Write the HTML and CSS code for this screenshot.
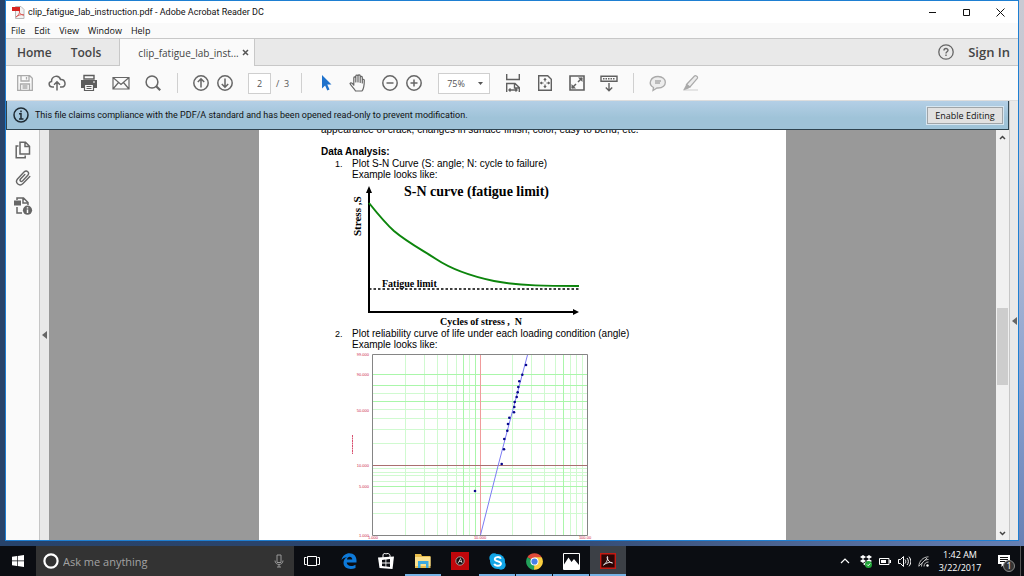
FILE: index.html
```html
<!DOCTYPE html>
<html lang="en">
<head>
<meta charset="utf-8">
<title>clip_fatigue_lab_instruction.pdf - Adobe Acrobat Reader DC</title>
<link rel="stylesheet" href="styles.css">
</head>
<body>
<div class="desktop">
  <div class="window">
    <header class="titlebar">
      <svg class="app-icon" width="13" height="13" viewBox="0 0 13 13"><path d="M3.500.5H9l3 3v9H3.500z" fill="#f3f3f3" stroke="#b9b9b9"/><path d="M0 1h8v4H0z" fill="#d8231f"/><path d="M4 11c2-1 4-4 3.500-6-.5 2 1.500 4 4.500 4-3-1-5.500 0-8 2z" fill="none" stroke="#d64a45" stroke-width=".8"/></svg>
      <h1 class="title">clip_fatigue_lab_instruction.pdf - Adobe Acrobat Reader DC</h1>
      <div class="caption-buttons">
        <button class="caption" aria-label="Minimize"><svg width="9" height="9" viewBox="0 0 9 9"><path d="M1 4.500h7" stroke="#111"/></svg></button>
        <button class="caption" aria-label="Maximize"><svg width="9" height="9" viewBox="0 0 9 9"><path d="M1.500 1.500h6v6h-6z" fill="none" stroke="#111"/></svg></button>
        <button class="caption" aria-label="Close"><svg width="9" height="9" viewBox="0 0 9 9"><path d="M.5.5l8 8M8.500.5l-8 8" stroke="#111"/></svg></button>
      </div>
    </header>
    <nav class="menubar">
      <button>File</button><button>Edit</button><button>View</button><button>Window</button><button>Help</button>
    </nav>
    <div class="tabbar">
      <button class="main-tab">Home</button>
      <button class="main-tab">Tools</button>
      <div class="doc-tab"><span>clip_fatigue_lab_inst...</span><button class="tab-close" aria-label="Close tab"><svg width="7" height="7" viewBox="0 0 7 7"><path d="M1 1l5 5M6 1L1 6" stroke="#555" stroke-width="1.500"/></svg></button></div>
      <div class="account">
        <button aria-label="Help"><svg width="16" height="16" viewBox="0 0 16 16" fill="none" stroke="#666"><circle cx="8" cy="8" r="7.200" stroke-width="1.300"/><path d="M6 6.500c0-2.600 4-2.600 4-.2C10 7.800 8 7.700 8 9.500M8 10.500v1.500" stroke-width="1.400"/></svg></button>
        <button class="sign-in">Sign In</button>
      </div>
    </div>
    <div class="toolbar">
      <div class="group spaced">
        <button aria-label="Save"><svg viewBox="0 0 20 20" fill="none" stroke="#aaa" stroke-width="1.300"><path d="M2.700 2.700h12l2.600 2.600v12H2.700zM6 3v5h8V3M5.500 17v-6h9v6M7.500 13h5M7.500 15h5M11.500 4v2.500"/></svg></button>
        <button aria-label="Cloud upload"><svg viewBox="0 0 20 20" fill="none" stroke="#666" stroke-width="1.500"><path d="M7 14H5.500C1.500 14 1 9 4.500 8.500 4.500 2.500 12 1.500 13.500 6.500 19 6 19.500 14 15 14h-2M10 17.500V9M7 11.800L10 8.800l3 3"/></svg></button>
        <button aria-label="Print"><svg viewBox="0 0 20 20"><path d="M5 2.500h10V6H5z" fill="none" stroke="#5d5d5d" stroke-width="1.400"/><path d="M2 7h16v8h-3v-3H5v3H2z" fill="#5d5d5d"/><path d="M5.500 11.500h9v6h-9zM7.500 13.500h5M7.500 15.500h5" fill="#fafafa" stroke="#5d5d5d" stroke-width="1.200"/><path d="M14 9h2" stroke="#fff"/></svg></button>
        <button aria-label="Email"><svg viewBox="0 0 20 20" fill="none" stroke="#666" stroke-width="1.200"><path d="M2 4.500h16v11.500H2zM2 4.500l8 7 8-7M2 16l5.500-6.500M18 16l-5.500-6.500"/></svg></button>
        <button aria-label="Find"><svg viewBox="0 0 20 20" fill="none" stroke="#666"><circle cx="9" cy="9" r="5.900" stroke-width="1.500"/><path d="M13.200 13.200l4 4" stroke-width="2.200"/></svg></button>
      </div>
      <div class="group pages">
        <button aria-label="Previous page"><svg viewBox="0 0 20 20" fill="none" stroke="#666" stroke-width="1.500"><circle cx="10" cy="10" r="7.200"/><path d="M10 14.500V6M6.800 9L10 5.800 13.200 9"/></svg></button>
        <button aria-label="Next page"><svg viewBox="0 0 20 20" fill="none" stroke="#666" stroke-width="1.500"><circle cx="10" cy="10" r="7.200"/><path d="M10 5.500V14M6.800 11l3.200 3.200 3.200-3.200"/></svg></button>
        <input class="page-number" type="text" value="2" aria-label="Page number">
        <span class="page-total">/&nbsp; 3</span>
      </div>
      <div class="group spaced">
        <button aria-label="Select"><svg viewBox="0 0 20 20"><path d="M6 2l9.500 9.500h-4.200l2.200 5-2.200 1-2.200-5L6 15.500z" fill="#1f72cc"/></svg></button>
        <button aria-label="Pan"><svg viewBox="0 0 20 20" fill="none" stroke="#666" stroke-width="1.200" stroke-linejoin="round"><path d="M7.500 18C6 15 3 13 2 10.500c.8-1.200 2.300-.5 3.800 1.700V4.800c.2-1.200 1.800-1.200 2 0V9 3c.2-1.200 2-1.200 2.200 0v6-6.200c.2-1.200 2-1.200 2.200 0V9.500 4.300c.3-1.200 1.900-1.100 2.100 0V10 7c.4-1.100 1.900-1 2 .2 0 5-.3 8.300-2.300 10.800z"/></svg></button>
        <div class="zoom-pair">
          <button aria-label="Zoom out"><svg viewBox="0 0 20 20" fill="none" stroke="#666" stroke-width="1.500"><circle cx="10" cy="10" r="7.200"/><path d="M6.500 10h7"/></svg></button>
          <button aria-label="Zoom in"><svg viewBox="0 0 20 20" fill="none" stroke="#666" stroke-width="1.500"><circle cx="10" cy="10" r="7.200"/><path d="M6.500 10h7M10 6.500v7"/></svg></button>
        </div>
        <select class="zoom-level" aria-label="Zoom level"><option>75%</option></select>
        <button aria-label="Fit width"><svg viewBox="0 0 20 20" fill="none" stroke="#606060" stroke-width="1.400"><path d="M3.700 1v5.500h12.600V1M3.700 19v-8.500H12l4.300 4V19M11.500 10.500v4.500h5M6 17h8M7.500 15.500L6 17l1.500 1.500M12.500 15.500L14 17l-1.500 1.500"/></svg></button>
        <button aria-label="Fit page"><svg viewBox="0 0 20 20" fill="none" stroke="#606060" stroke-width="1.400"><path d="M3.700 2.700h9l3.600 3.600v11H3.700z"/><path stroke-width="1.100" d="M10 5.500v3M10 11.500v3M5.500 10h3M11.500 10h3M8.800 6.800L10 5.500l1.200 1.300M8.800 13.200l1.200 1.300 1.200-1.300M6.800 8.800L5.500 10l1.300 1.200M13.200 8.800l1.300 1.200-1.300 1.200"/></svg></button>
        <button aria-label="Full screen"><svg viewBox="0 0 20 20" fill="none" stroke="#606060"><path stroke-width="1.600" d="M3 3h14v14H3z"/><path stroke-width="1.500" d="M11 9l4-4M9 11l-4 4"/><path d="M11 4.500h4.500V9zM4.500 11v4.500H9z" fill="#606060" stroke="none"/></svg></button>
        <button aria-label="Read mode"><svg viewBox="0 0 20 20" fill="none" stroke="#606060" stroke-width="1.400"><path d="M2 3.200h16v5H2z"/><path d="M4 5.800h12" stroke-dasharray="1.500 1"/><path d="M10 10v7.500M6.800 14.500l3.200 3.200 3.200-3.200"/></svg></button>
      </div>
      <div class="group spaced">
        <button aria-label="Comment"><svg viewBox="0 0 20 20" fill="#ededed" stroke="#aaa" stroke-width="1.300"><path d="M5.500 14.500C-.5 11 2.500 3.500 10 3.500c9.500 0 10 11.500 0 11.500H9L5 17.500zM7 8h6M7 10h5"/></svg></button>
        <button aria-label="Highlight"><svg viewBox="0 0 20 20"><path d="M4 16h14v2H4z" fill="#e4e4e4"/><path d="M6.500 11.500L14.500 3c1-1 4 .8 2.800 2.300L10 14z" fill="#ececec" stroke="#aaa" stroke-width="1.200"/><path d="M6.500 11l4 3.200-2.500 1.500L3 17.500z" fill="#aaa"/></svg></button>
      </div>
    </div>

    <div class="workspace">
      <div class="doc-column">
        <div class="notice">
          <svg width="16" height="16" viewBox="0 0 16 16" fill="none" stroke="#1f2b33"><circle cx="8" cy="8" r="7" stroke-width="1.500"/><path d="M6 6.800h2V12M6 12h4.500M8 3.500v1.700" stroke-width="1.500"/></svg>
          <p>This file claims compliance with the PDF/A standard and has been opened read-only to prevent modification.</p>
          <button class="enable">Enable Editing</button>
        </div>
        <div class="viewer">
          <aside class="side-tools">
            <button aria-label="Page thumbnails"><svg width="16" height="18" viewBox="0 0 16 18" fill="none" stroke="#666" stroke-width="1.500"><path d="M5 1.200h5.500l4 4V13H5zM10 1.500v4h4.500M3.500 5H1.200v11.700h9V14.500"/></svg></button>
            <button aria-label="Attachments"><svg width="16" height="18" viewBox="0 0 16 18" fill="none" stroke="#666" stroke-width="1.400" stroke-linecap="round"><path d="M14.800 7.500L8 14.500c-3.500 3.500-8.500-.5-5.500-4.500L9 3c2.800-2.500 6 .5 3.800 3.300L7.500 12c-1.700 1.200-3.200-.3-2-2l4.300-4.500"/></svg></button>
            <button aria-label="Document standards"><svg width="20" height="18" viewBox="0 0 20 18" fill="none" stroke="#666" stroke-width="1.500"><path d="M4 3V1h6.500L15 5.500V8M10 1v5h5M4 10v6h5"/><path d="M1 3.500h7v5H1z" fill="#666" stroke="none"/><circle cx="14.500" cy="13.200" r="4.600" fill="#666" stroke="none"/><path d="M14.500 12.500v3.500M14.500 10.200v1.300" stroke="#fff"/></svg></button>
          </aside>
          <button class="collapser" aria-label="Collapse navigation"><svg width="5" height="8" viewBox="0 0 5 8"><path d="M5 0v8L0 4z" fill="#666"/></svg></button>
          <main class="canvas">
            <article class="page">
              <p class="cut-line">appearance of crack, changes in surface finish, color, easy to bend, etc.</p>
              <h2>Data Analysis:</h2>
              <ol>
                <li>Plot S-N Curve (S: angle; N: cycle to failure)<br>Example looks like:
                  <svg class="figure" width="240" height="146" viewBox="352 182 240 146" font-family="Liberation Serif, serif" font-weight="bold">
                    <text x="404" y="196" font-size="14">S-N curve (fatigue limit)</text>
                    <text transform="translate(361 236) rotate(-90)" font-size="11">Stress ,S</text>
                    <text x="382" y="287" font-size="10">Fatigue limit</text>
                    <text x="440" y="325" font-size="10">Cycles of stress ,&#160; N</text>
                    <path d="M369 190v122h206" fill="none" stroke="#000" stroke-width="2"/>
                    <path d="M366 193l3-7 3 7zM573 309l6 3-6 3z"/>
                    <path d="M369 289h210" stroke="#000" stroke-width="1.500" stroke-dasharray="2.500 2"/>
                    <path d="M369 203C377 213 385 223 394 231C407 242 422 250 436 259C454 271 475 277 494 281C520 286 550 286 579 286" fill="none" stroke="#0c850c" stroke-width="2"/>
                  </svg>
                </li>
                <li>Plot reliability curve of life under each loading condition (angle)<br>Example looks like:
                  <svg class="figure" width="242" height="196" viewBox="352 352 242 196" font-family="Liberation Sans, sans-serif">
                    <path d="M405.500 355v180M424.500 355v180M437.500 355v180M447.500 355v180M456.500 355v180M469.500 355v180M512.500 355v180M531.500 355v180M544.500 355v180M555.500 355v180M570.500 355v180M576.500 355v180M582.500 355v180M373 393.500h215M373 409.500h215M373 418.500h215M373 429.500h215M373 443.500h215M373 468.500h215M373 472.500h215M373 475.500h215M373 481.500h215M373 493.500h215M373 502.500h215M373 513.500h215" stroke="#d0fad0" fill="none"/>
                    <path d="M463.500 355v180M475.500 355v180M563.500 355v180M373 374.500h215M373 385.500h215M373 401.500h215M373 486.500h215" stroke="#aaf6aa" fill="none"/>
                    <path d="M480.500 355v180" stroke="#f09b9b"/>
                    <path d="M372 465.500h216" stroke="#a96f6f"/>
                    <path d="M372.500 354.500h215v181h-215z" fill="none" stroke="#858585"/>
                    <path d="M527.500 355L512 413L498 466L480.500 535" fill="none" stroke="#7b7bf4"/>
                    <g fill="#08088c"><circle cx="526" cy="365" r="1.300"/><circle cx="522.300" cy="374.700" r="1.300"/><circle cx="519.300" cy="381.300" r="1.300"/><circle cx="518.300" cy="387" r="1.300"/><circle cx="517.700" cy="392.300" r="1.300"/><circle cx="516.700" cy="397" r="1.300"/><circle cx="514.700" cy="402" r="1.300"/><circle cx="514.300" cy="407" r="1.300"/><circle cx="514" cy="412.300" r="1.300"/><circle cx="509.300" cy="417.700" r="1.300"/><circle cx="508" cy="424" r="1.300"/><circle cx="507.300" cy="430.700" r="1.300"/><circle cx="504.300" cy="439" r="1.300"/><circle cx="504" cy="449.300" r="1.300"/><circle cx="501.700" cy="464" r="1.300"/><circle cx="475" cy="491" r="1.300"/></g>
                    <path d="M352.500 435v19" stroke="#d8506f" stroke-dasharray="2 .5"/>
                    <g font-size="4" fill="#cc2448" text-anchor="end"><text x="369" y="356">99.000</text><text x="369" y="376">90.000</text><text x="369" y="412">50.000</text><text x="369" y="467">10.000</text><text x="369" y="488">5.000</text><text x="369" y="537">1.000</text></g>
                    <g font-size="4" fill="#cc2448" text-anchor="middle"><text x="373" y="539">1.000</text><text x="480" y="539">10.000</text><text x="585" y="539">100.00</text></g>
                  </svg>
                </li>
              </ol>
            </article>
          </main>
          <div class="scrollbar">
            <button aria-label="Scroll up"><svg width="7" height="5" viewBox="0 0 7 5"><path d="M1 4l2.500-2.500L6 4" fill="none" stroke="#444" stroke-width="1.500"/></svg></button>
            <div class="track"><div class="thumb"></div></div>
            <button aria-label="Scroll down"><svg width="7" height="5" viewBox="0 0 7 5"><path d="M1 1l2.500 2.500L6 1" fill="none" stroke="#444" stroke-width="1.500"/></svg></button>
          </div>
        </div>
      </div>
      <button class="collapser right" aria-label="Show tools pane"><svg width="5" height="8" viewBox="0 0 5 8"><path d="M5 0v8L0 4z" fill="#666"/></svg></button>
    </div>
  </div>
</div>

<footer class="taskbar">
  <button class="start" aria-label="Start"><svg width="12" height="12" viewBox="0 0 12 12" fill="#fff"><path d="M0 1.700L5 1v4.600H0zM5.700.9L12 0v5.600H5.700zM0 6.300h5V11l-5-.7zM5.700 6.300H12V12l-6.300-.9z"/></svg></button>
  <div class="search">
    <svg width="16" height="16" viewBox="0 0 16 16"><circle cx="8" cy="8" r="6.600" fill="none" stroke="#fff" stroke-width="2.200"/></svg>
    <input type="text" placeholder="Ask me anything" aria-label="Ask me anything">
    <svg width="10" height="14" viewBox="0 0 10 14" fill="none" stroke="#999"><path d="M3 1h4v7.500H3zM1 6.500c0 5.300 8 5.300 8 0M5 10.500V13M3 13h4"/></svg>
  </div>
  <div class="apps">
    <button aria-label="Task view"><svg width="16" height="12" viewBox="0 0 16 12" fill="none" stroke="#fff"><path d="M3.500 1.500h9v9h-9zM2.500 2.500h-2v7h2M13.500 2.500h2v7h-2"/></svg></button>
    <button aria-label="Edge"><svg width="16" height="16" viewBox="0 0 16 16"><path d="M.5 7C1.500 2.500 5 .3 8.300.3c4.700 0 7.200 3.200 7.200 7.200v2H5.700c.2 4 5.500 4.200 8.800 2.200v3.200c-5 2.400-12 .8-12-5.100 0-2.700 1.500-4.600 3.700-5.500C3.500 4.400 1.500 5.500.5 7zM6 6.500h5.300C11.200 2.800 6.300 3 6 6.500z" fill="#0e7ada"/></svg></button>
    <button aria-label="Store"><svg width="16" height="18" viewBox="0 0 16 18"><path d="M5 6V3c0-1.500 2-2 3-1 1-1 4-.5 4 1.500V5" fill="none" stroke="#fff"/><path d="M0 5.500L16 4.500 14.500 17 1.500 16z" fill="#fff"/><path d="M4 8l3.500-.4v3H4zM8.300 7.500L12 7v3.600H8.300zM4 11.400h3.500v3L4 14zM8.300 11.400H12V15l-3.700-.5z" fill="#0b0d12"/></svg></button>
    <button class="open" aria-label="File Explorer"><svg width="16" height="16" viewBox="0 0 16 16"><path d="M0 1h6l1 2h8.500v12H0z" fill="#e9bd4c"/><path d="M0 4h15.500v9H0z" fill="#fbe08e"/><path d="M3 8h10.500v7H11v-4H5.500v4H3z" fill="#3ca9e0"/></svg></button>
    <button aria-label="Media app"><svg width="18" height="18" viewBox="0 0 18 18"><path d="M0 0h18v18H0z" fill="#c1070b"/><circle cx="9" cy="9" r="4.200" fill="#1a1010" stroke="#a99"/><path d="M7 11.500L9.500 6.500 11 11M8 9.500h3" fill="none" stroke="#ddd" stroke-width=".8"/></svg></button>
    <button class="open" aria-label="Skype"><svg width="17" height="17" viewBox="0 0 17 17"><g fill="#12a5e6"><circle cx="5" cy="5" r="4.700"/><circle cx="12" cy="12" r="4.700"/><circle cx="8.500" cy="8.500" r="7.500"/></g><path d="M11.800 5.800c-.8-2.500-6.200-2.200-6 .4.200 2.600 6.200 1.600 6.200 4.400 0 2.900-6 2.800-6.700.1" fill="none" stroke="#fff" stroke-width="1.900"/></svg></button>
    <button class="open" aria-label="Chrome"><svg width="17" height="17" viewBox="0 0 17 17"><path d="M8.500 8.500L1.300 4.300A8.300 8.300 0 0 1 15.700 4.300z" fill="#df4a3a"/><path d="M8.500 8.500L1.300 4.300A8.300 8.300 0 0 0 8.500 16.800z" fill="#22a05a"/><path d="M8.500 8.500L8 16.800A8.300 8.300 0 0 0 15.700 4.300H8.500z" fill="#fbcf3f"/><circle cx="8.500" cy="8.500" r="4" fill="#fff"/><circle cx="8.500" cy="8.500" r="3.100" fill="#477fe8"/></svg></button>
    <button class="open" aria-label="Photos"><svg width="17" height="17" viewBox="0 0 17 17"><path d="M.5.5h16v16H.5z" fill="#0b0d12" stroke="#fff"/><path d="M1 16v-4.500l4.500-7 3 4.500 2.500-3 5 6V16z" fill="#fff"/></svg></button>
    <button class="open active" aria-label="Adobe Acrobat Reader"><svg width="16" height="16" viewBox="0 0 16 16"><path d="M.7.7h14.600v14.600H.7z" fill="#2c0606" stroke="#c51a12" stroke-width="1.400"/><path d="M3.500 12c2-1 5-5.500 4-8.500-1.500 1 1.500 6.500 5 6.500-2-1.500-6.500 0-9 2z" fill="none" stroke="#eee"/></svg></button>
  </div>
  <div class="tray">
    <button aria-label="Show hidden icons"><svg width="10" height="6" viewBox="0 0 10 6"><path d="M1 5l4-4 4 4" fill="none" stroke="#fff" stroke-width="1.200"/></svg></button>
    <svg width="12" height="13" viewBox="0 0 12 13"><path d="M3 0l3 2-3 2-3-2zM9 0l3 2-3 2-3-2zM3 4l3 2-3 2-3-2zM9 4l3 2-3 2-3-2zM6 7l3 2-3 2-3-2z" fill="#fff"/><circle cx="8.500" cy="9.500" r="3.500" fill="#23a63a"/><path d="M7 9.500l1.200 1.200 2-2.200" fill="none" stroke="#fff"/></svg>
    <svg width="12" height="9" viewBox="0 0 12 9"><path d="M.5 1.500h9.500v6H.5z" fill="none" stroke="#fff"/><path d="M2 3h5v3H2zM10.500 3h1.500v3h-1.500z" fill="#fff"/></svg>
    <svg width="13" height="11" viewBox="0 0 13 11" fill="none" stroke="#fff"><path d="M.5 3.500h2l3-3v10l-3-3h-2zM7 3.500c1 1 1 3 0 4M9 2c1.800 1.800 1.800 5.200 0 7M11 .7c2.300 2.700 2.300 7 0 9.600"/></svg>
    <svg width="11" height="11" viewBox="0 0 11 11" fill="none" stroke="#bbb"><path d="M.8 10.500C1 5 5 1 10.500.8M3.500 10.500c0-4 3-7 7-7M6 10.500c0-3 2-4.500 4.500-4.500"/><circle cx="9.500" cy="9.500" r="1.200" fill="#fff" stroke="none"/><path d="M1 10L9 2"/></svg>
    <div class="clock"><time>1:42 AM</time><time>3/22/2017</time></div>
    <button class="notifications" aria-label="Notifications"><svg width="13" height="13" viewBox="0 0 13 13"><path d="M0 0h12v9H6.500L3.500 12V9H0z" fill="#fff"/><path d="M2 2.500h8M2 4.500h8M2 6.500h5" stroke="#111"/></svg><span class="badge">1</span></button>
  </div>
</footer>
</body>
</html>
```

FILE: styles.css
```css
* { box-sizing: border-box; }
body {
  margin: 0;
  height: 100vh;
  display: flex;
  flex-direction: column;
  overflow: hidden;
  font-family: "Open Sans", "Noto Sans", sans-serif;
  font-size: 9px;
  color: #111;
}
h1, h2, p, ol { margin: 0; padding: 0; font: inherit; }
button {
  margin: 0;
  padding: 0;
  border: 0;
  background: none;
  font: inherit;
  color: inherit;
  display: flex;
  align-items: center;
  justify-content: center;
}
svg { display: block; flex: none; }

.desktop {
  flex: 1;
  min-height: 0;
  display: flex;
  padding: 0 5px 5px;
  background:
    linear-gradient(#c9cad3, #c3c6d4 30%, #8ba2d0 70%, #6780b4) right / 5px 100% no-repeat,
    linear-gradient(90deg, #27436b, #2d456d 50%, #6780b4);
}
.window {
  flex: 1;
  min-width: 0;
  display: flex;
  flex-direction: column;
  border: 1px solid #1e7fd2;
  background: #fafafa;
}

.titlebar { display: flex; align-items: center; height: 22px; padding-left: 6px; gap: 3px; background: #fff; }
.title { flex: 1; white-space: nowrap; font-family: Roboto, sans-serif; }
.caption-buttons { display: flex; padding-right: 1px; }
.caption { width: 34px; height: 22px; }

.menubar { display: flex; align-items: center; gap: 9px; height: 15px; padding-left: 5px; }

.tabbar {
  display: flex;
  height: 28px;
  background: #e9e9e9;
  border: solid #c8c8c8;
  border-width: 1px 0;
  font-size: 12px;
  color: #444;
}
.main-tab { font-weight: 600; padding: 0 8px 0 11px; }
.doc-tab {
  display: flex;
  align-items: center;
  gap: 3px;
  margin: 0 0 -1px 10px;
  padding: 0 5px 0 18px;
  background: #fafafa;
  border: solid #c8c8c8;
  border-width: 0 1px;
  font-size: 10px;
}
.account { display: flex; gap: 14px; margin-left: auto; padding-right: 8px; }
.sign-in { font-size: 13px; font-weight: 600; }

.toolbar { display: flex; align-items: center; height: 35px; border-bottom: 1px solid #ddd; }
.toolbar svg { width: 20px; height: 20px; }
.toolbar button { width: 24px; height: 24px; }
.group { display: flex; align-items: center; height: 20px; padding: 0 12px; border-left: 1px solid #d0d0d0; }
.group:first-child { padding-left: 7px; border-left: 0; }
.group.pages { padding-left: 11px; }
.group.spaced { gap: 8px; }
.zoom-pair { display: flex; }
.page-number, .zoom-level {
  height: 21px;
  border: 1px solid #cfcfcf;
  background: #fff;
  font: inherit;
  color: #555;
}
.page-number { width: 23px; margin-left: 11px; padding: 0; text-align: center; }
.page-total { margin-left: 5px; color: #555; }
.zoom-level {
  width: 52px;
  margin: 0 3px 0 4px;
  padding: 0 8px;
  appearance: none;
  border-radius: 0;
  background: #fff url("data:image/svg+xml,%3Csvg xmlns='http://www.w3.org/2000/svg' width='5' height='3'%3E%3Cpath d='M0 0h5L2.5 3z' fill='%23555'/%3E%3C/svg%3E") no-repeat right 6px center;
}

.workspace { flex: 1; min-height: 0; display: flex; }
.doc-column { flex: 1; min-width: 0; display: flex; flex-direction: column; }
.notice {
  display: flex;
  align-items: center;
  gap: 6px;
  height: 29px;
  padding: 0 5px 0 6px;
  border: solid #2f4450;
  border-width: 0 1px 1px;
  background: linear-gradient(#b4cfe6, #9fc3d8 60%);
}
.notice p { flex: 1; white-space: nowrap; font-family: Roboto, sans-serif; }
.notice .enable {
  width: 76px;
  height: 17px;
  border: 1px solid #a0a5a8;
  outline: 1px solid #d7e6f1;
  background: #e1e1e1;
}
.viewer { flex: 1; min-height: 0; display: flex; }
.side-tools { width: 34px; display: flex; flex-direction: column; align-items: center; gap: 10px; padding-top: 11px; border-right: 1px solid #c6c6c6; }
.collapser { width: 9px; background: #e9e9e9; }
.collapser.right { border-left: 1px solid #c6c6c6; }

.canvas { flex: 1; min-width: 0; display: flex; justify-content: center; overflow: hidden; background: #999; }
.page {
  flex: 0 0 527px;
  padding-left: 62px;
  background: #fff;
  font: 10px/11px "Liberation Sans", Arial, sans-serif;
  color: #000;
  overflow: hidden;
}
.cut-line { margin-top: -6px; }
.page h2 { margin-top: 11px; font-weight: bold; }
.page ol { margin-top: 1px; padding-left: 24px; }
.page li { padding-left: 7px; }
.page li::marker { font-size: 9px; }
.figure { margin-top: 2px; }

.scrollbar { width: 13px; display: flex; flex-direction: column; background: #f0f0f0; }
.scrollbar button { height: 14px; }
.track { flex: 1; display: flex; flex-direction: column; }
.track::before { content: ""; flex: 164; }
.thumb { flex: 77; margin: 0 1px; background: #cdcdcd; }
.track::after { content: ""; flex: 141; }

.taskbar { display: flex; height: 30px; background: #0b0d12; color: #fff; }
.start { width: 36px; }
.search { display: flex; align-items: center; gap: 4px; width: 258px; padding: 0 10px 0 7px; background: #333; }
.search input { flex: 1; min-width: 0; padding: 0; border: 0; background: none; color: #fff; font: inherit; font-size: 11px; }
.search input::placeholder { color: #a3a3a3; opacity: 1; }
.apps { display: flex; gap: 1px; }
.apps button { width: 36px; height: 30px; border: solid transparent; border-width: 2px 0; }
.apps .open { border-bottom-color: #76b2e4; }
.apps .active { background: #3c4046; border-top-color: #3c4046; }
.tray { display: flex; align-items: center; gap: 7px; margin-left: auto; padding-right: 3px; border-right: 1px solid #555; margin-right: 3px; }
.tray > button:first-child { margin-right: 3px; }
.clock { display: flex; flex-direction: column; align-items: center; line-height: 13px; width: 48px; }
.notifications { position: relative; width: 26px; height: 30px; }
.badge {
  position: absolute;
  left: 12px;
  top: 14px;
  width: 12px;
  height: 12px;
  border: 1px solid #888;
  border-radius: 50%;
  background: #333;
  line-height: 10px;
  text-align: center;
}
```
